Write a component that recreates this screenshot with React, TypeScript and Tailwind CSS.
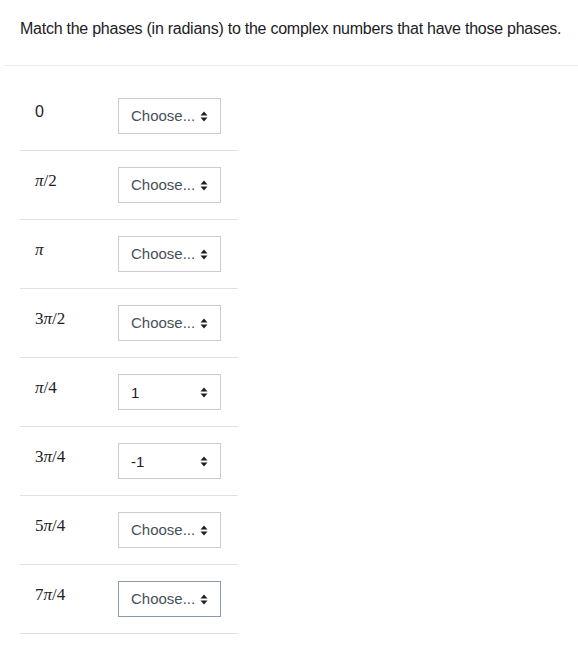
import React from "react";

const rows: { n?: string; d?: string; zero?: boolean; value: string; focus?: boolean }[] = [
  { zero: true, value: "Choose..." },
  { d: "2", value: "Choose..." },
  { value: "Choose..." },
  { n: "3", d: "2", value: "Choose..." },
  { d: "4", value: "1" },
  { n: "3", d: "4", value: "-1" },
  { n: "5", d: "4", value: "Choose..." },
  { n: "7", d: "4", value: "Choose...", focus: true },
];

function Arrows() {
  return (
    <svg width="8" height="11" viewBox="0 0 8 11" className="shrink-0">
      <path d="M4 0.5 L7.5 4.5 L0.5 4.5 Z" fill="#1d2125" />
      <path d="M4 10.5 L7.5 6.5 L0.5 6.5 Z" fill="#1d2125" />
    </svg>
  );
}

export default function App() {
  return (
    <div className="w-[578px] min-h-[655px] bg-white" style={{ fontFamily: '"Liberation Sans", Arial, sans-serif' }}>
      <div className="pl-5 pt-[17px] pb-[24px] text-[16px] leading-6 tracking-[-0.25px] whitespace-nowrap text-[#1d2125]">
        Match the phases (in radians) to the complex numbers that have those phases.
      </div>
      <div className="ml-1 h-px bg-[#e9ecef]" />
      <div className="ml-5 mt-[16px] w-[218px]">
        {rows.map((r, i) => (
          <div key={i} className="flex items-start h-[69px] pt-[16px] border-b border-[#dee2e6]">
            <div className="w-[98px] pl-[15px] pt-[2px] leading-6 text-[#1d2125]">
              {r.zero ? (
                <span className="text-[16px]">0</span>
              ) : (
                <span className="text-[17px]" style={{ fontFamily: '"Liberation Serif", "Times New Roman", serif' }}>
                  {r.n}
                  <i>π</i>
                  {r.d ? `/${r.d}` : ""}
                </span>
              )}
            </div>
            <div
              className={`w-[103px] h-[36px] flex items-center justify-between pl-[12px] pr-[12px] border bg-white ${
                r.focus ? "border-[#8a9aae]" : "border-[#c9cdd2]"
              }`}
            >
              <span
                className={`text-[15px] ${
                  r.value === "Choose..." ? "text-[#495057]" : "text-[#1d2125] pt-[2px]"
                }`}
              >
                {r.value}
              </span>
              <Arrows />
            </div>
          </div>
        ))}
      </div>
    </div>
  );
}
